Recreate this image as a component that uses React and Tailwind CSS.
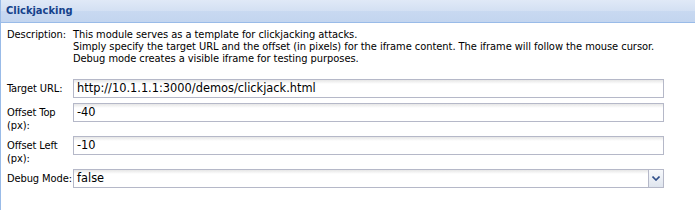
import React from "react";

function Field({ label, value, select, rowH }) {
  return (
    <div className={`flex ${rowH}`}>
      <div className="w-[72px] shrink-0 pl-[6px] pt-[3px] text-[11px] leading-[13px] text-black tracking-[-0.1px]">
        {label}
      </div>
      <div className="w-[591px] h-[19px] flex border border-[#b5b8c8] bg-[linear-gradient(to_bottom,#e6e6e6,#ffffff_4px)]">
        <div className="flex-1 pl-[3px] text-[11.4px] leading-[17px] text-black font-['DejaVu_Sans',sans-serif] [font-stretch:normal] tracking-normal">
          {value}
        </div>
        {select && (
          <div className="w-[15px] h-full border-l border-[#b5b8c8] bg-[linear-gradient(to_bottom,#f7f9fc,#dfe5ee)] flex items-center justify-center">
            <svg width="8" height="5" viewBox="0 0 8 5">
              <path d="M0.5 0.5 L4 4 L7.5 0.5" fill="none" stroke="#2f4f8a" strokeWidth="1.6" />
            </svg>
          </div>
        )}
      </div>
    </div>
  );
}

export default function App() {
  return (
    <div className="w-[695px] h-[210px] bg-white border-l border-[#99bbe8] font-['DejaVu_Sans_Condensed','DejaVu_Sans',sans-serif] [font-stretch:condensed] overflow-hidden">
      <div className="h-[23px] border-b border-[#99bbe8] bg-[linear-gradient(to_bottom,#e0e9f7,#d3e0f3_50%,#c8d9f1_51%,#c3d5ef)] pl-[5px] flex items-center">
        <span className="text-[11px] font-bold text-[#15428b]">Clickjacking</span>
      </div>
      <div className="pt-[6px]">
        <div className="flex tracking-[-0.05px]">
          <div className="w-[72px] shrink-0 pl-[6px] text-[11px] leading-[12px]">Description:</div>
          <div className="text-[11px] leading-[12px] text-black">
            <div>This module serves as a template for clickjacking attacks.</div>
            <div>Simply specify the target URL and the offset (in pixels) for the iframe content. The iframe will follow the mouse cursor.</div>
            <div>Debug mode creates a visible iframe for testing purposes.</div>
          </div>
        </div>
        <div className="mt-[14px]">
          <Field label="Target URL:" value="http://10.1.1.1:3000/demos/clickjack.html" rowH="h-[24px]" />
          <Field label={<>Offset Top<br />(px):</>} value="-40" rowH="h-[33px]" />
          <Field label={<>Offset Left<br />(px):</>} value="-10" rowH="h-[33px]" />
          <Field label="Debug Mode:" value="false" select rowH="h-[24px]" />
        </div>
      </div>
    </div>
  );
}
